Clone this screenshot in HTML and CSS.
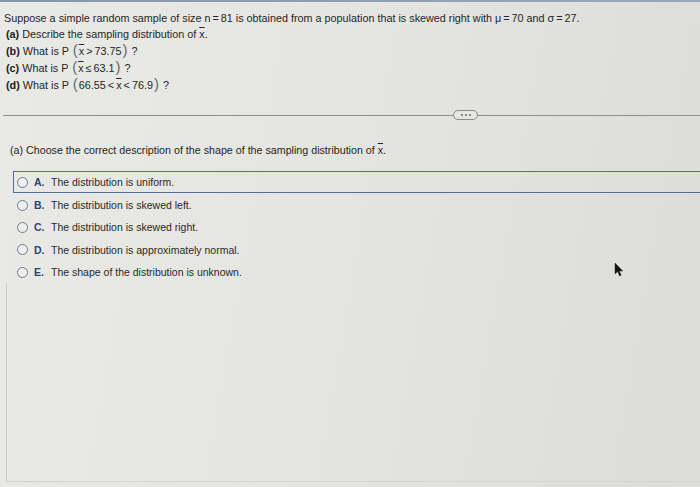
FILE: index.html
```html
<!DOCTYPE html>
<html>
<head>
<meta charset="utf-8">
<link rel="stylesheet" href="styles.css">
</head>
<body>
<div class="topbar"></div>
<div class="question">
  <div class="line">Suppose a simple random sample of size n<span class="op">=</span>81 is obtained from a population that is skewed right with μ<span class="op">=</span>70 and σ<span class="op">=</span>27.</div>
  <div class="line"><b>(a)</b> Describe the sampling distribution of <span class="xbar">x</span>.</div>
  <div class="line"><b>(b)</b> What is P <span class="paren">(</span><span class="xbar">x</span><span class="op">&gt;</span>73.75<span class="paren">)</span> ?</div>
  <div class="line"><b>(c)</b> What is P <span class="paren">(</span><span class="xbar">x</span><span class="op">≤</span>63.1<span class="paren">)</span> ?</div>
  <div class="line"><b>(d)</b> What is P <span class="paren">(</span>66.55<span class="op">&lt;</span><span class="xbar">x</span><span class="op">&lt;</span>76.9<span class="paren">)</span> ?</div>
</div>
<div class="divider">
  <div class="rule rule-left"></div>
  <div class="pill"><span class="dot"></span><span class="dot"></span><span class="dot"></span></div>
  <div class="rule rule-right"></div>
</div>
<p class="prompt">(a) Choose the correct description of the shape of the sampling distribution of <span class="xbar">x</span>.</p>
<ul class="options">
  <li class="option selected"><span class="radio"></span><span class="letter">A.</span><span class="text">The distribution is uniform.</span></li>
  <li class="option"><span class="radio"></span><span class="letter">B.</span><span class="text">The distribution is skewed left.</span></li>
  <li class="option"><span class="radio"></span><span class="letter">C.</span><span class="text">The distribution is skewed right.</span></li>
  <li class="option"><span class="radio"></span><span class="letter">D.</span><span class="text">The distribution is approximately normal.</span></li>
  <li class="option"><span class="radio"></span><span class="letter">E.</span><span class="text">The shape of the distribution is unknown.</span></li>
</ul>
<div class="panel"></div>
<svg class="cursor" width="10" height="14" viewBox="0 0 10 14"><path d="M1 0 L1 11 L3.6 8.6 L5.6 13 L7.2 12.2 L5.3 8 L8.8 8 Z" fill="#111" stroke="#333" stroke-width="0.5"/></svg>
</body>
</html>
```
FILE: styles.css
```css
html, body {
  margin: 0;
  padding: 0;
}
body {
  width: 700px;
  height: 487px;
  overflow: hidden;
  position: relative;
  font-family: "Liberation Sans", Arial, sans-serif;
  color: #262626;
  background: linear-gradient(100deg, #e9e9e5 0%, #e4e4e0 50%, #dcdcd8 100%);
}
.topbar {
  height: 2px;
  background: linear-gradient(90deg, #8595ab, #9aa8ba);
}
.question {
  padding: 8px 0 0 4px;
  font-size: 10.8px;
  line-height: 16px;
}
.line:nth-child(n+2) {
  padding-left: 2px;
}
.line b {
  font-weight: bold;
  color: #222;
}
.op {
  margin: 0 2px;
}
.xbar {
  text-decoration: overline;
  text-decoration-thickness: 1px;
}
.paren {
  font-size: 15px;
  line-height: 1;
  color: #6a6a6a;
  font-weight: 300;
  margin: 0 1px;
}
.divider {
  display: flex;
  align-items: center;
  height: 10px;
  margin-top: 17px;
  padding-left: 3px;
}
.rule {
  height: 1px;
  background: #8e8e8c;
}
.rule-left {
  width: 450px;
}
.rule-right {
  flex: 1;
}
.pill {
  width: 23px;
  height: 8px;
  border: 1px solid #8a8a88;
  border-radius: 5px;
  display: flex;
  align-items: center;
  justify-content: center;
  gap: 2px;
  background: #e6e6e2;
}
.dot {
  width: 2px;
  height: 2px;
  border-radius: 50%;
  background: #6a6a6a;
}
.prompt {
  margin: 23px 0 0 10px;
  font-size: 10.7px;
  line-height: 14px;
}
.options {
  list-style: none;
  margin: 14px 0 0 0;
  padding: 0;
  font-size: 10.5px;
}
.option {
  display: flex;
  align-items: center;
  height: 22.3px;
  margin-left: 13px;
  border-left: 1.5px solid transparent;
  padding-left: 3px;
}
.option.selected {
  height: 20px;
  border-top: 1.5px solid #4f6e98;
  border-bottom: 1.5px solid #4f6e98;
  border-left: 1.5px solid #4f6e98;
  margin-bottom: 1px;
}
.radio {
  width: 9px;
  height: 9px;
  border: 1.3px solid #6d7c92;
  border-radius: 50%;
  background: #eeeeea;
  flex: none;
}
.letter {
  width: 17px;
  margin-left: 6px;
  font-weight: bold;
  color: #2e4470;
  flex: none;
}
.text {
  color: #2a2a2a;
}
.panel {
  margin: 0 0 0 6px;
  height: 198px;
  border-left: 1px solid #cacac6;
  border-bottom: 1px solid #d4d4d0;
}
.cursor {
  position: absolute;
  left: 614px;
  top: 263px;
}
```
